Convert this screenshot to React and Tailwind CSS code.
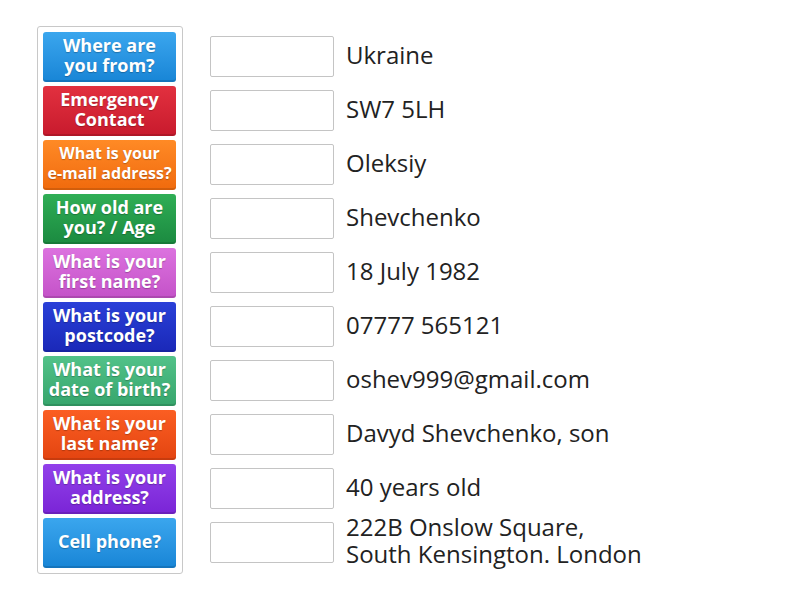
import React from "react";

const cards = [
  { t: ["Where are", "you from?"], c: "from-[#3aa6ee] to-[#1785d6]", s: "text-[18px]" },
  { t: ["Emergency", "Contact"], c: "from-[#e2303f] to-[#c81a2d]", s: "text-[18px]" },
  { t: ["What is your", "e-mail address?"], c: "from-[#ff8a25] to-[#f06a0c]", s: "text-[16px]" },
  { t: ["How old are", "you? / Age"], c: "from-[#2fae55] to-[#1b8a40]", s: "text-[18px]" },
  { t: ["What is your", "first name?"], c: "from-[#dc72df] to-[#c452c8]", s: "text-[18px]" },
  { t: ["What is your", "postcode?"], c: "from-[#2a40d8] to-[#1a28b8]", s: "text-[18px]" },
  { t: ["What is your", "date of birth?"], c: "from-[#52c289] to-[#36a56c]", s: "text-[18px]" },
  { t: ["What is your", "last name?"], c: "from-[#fb5e22] to-[#e34410]", s: "text-[18px]" },
  { t: ["What is your", "address?"], c: "from-[#9240ea] to-[#7a24d6]", s: "text-[18px]" },
  { t: ["Cell phone?"], c: "from-[#3aa6ee] to-[#1785d6]", s: "text-[18px]" },
];

const answers = [
  ["Ukraine"],
  ["SW7 5LH"],
  ["Oleksiy"],
  ["Shevchenko"],
  ["18 July 1982"],
  ["07777 565121"],
  ["oshev999@gmail.com"],
  ["Davyd Shevchenko, son"],
  ["40 years old"],
  ["222B Onslow Square,", "South Kensington. London"],
];

export default function App() {
  return (
    <div className="w-[800px] h-[600px] bg-white flex" style={{ fontFamily: '"Open Sans", sans-serif' }}>
      <div className="ml-[37px] mt-[26px] w-[146px] h-[548px] border border-[#c8c8c8] rounded-[3px] px-[5px] pt-[5px] flex flex-col gap-[4px]">
        {cards.map((c, i) => (
          <div
            key={i}
            className={`h-[50px] w-[133px] rounded-[3px] bg-gradient-to-b ${c.c} flex flex-col items-center justify-center pb-[4px] text-white font-bold leading-[20px] ${c.s} [text-shadow:0_1px_1px_rgba(0,0,0,0.25)] shadow-[inset_0_-2px_0_rgba(0,0,0,0.12)]`}
          >
            {c.t.map((l, j) => (
              <span key={j} className="whitespace-nowrap">{l}</span>
            ))}
          </div>
        ))}
      </div>
      <div className="ml-[27px] mt-[36px] flex flex-col gap-[13px]">
        {answers.map((a, i) => (
          <div key={i} className="flex items-center h-[41px]">
            <div className="w-[124px] h-[41px] border border-[#c4c4c4] rounded-[2px] bg-white shrink-0" />
            <div className="ml-[12px] mb-[5px] text-[24px] text-[#222] leading-[27px] flex flex-col">
              {a.map((l, j) => (
                <span key={j} className="whitespace-nowrap">{l}</span>
              ))}
            </div>
          </div>
        ))}
      </div>
    </div>
  );
}
